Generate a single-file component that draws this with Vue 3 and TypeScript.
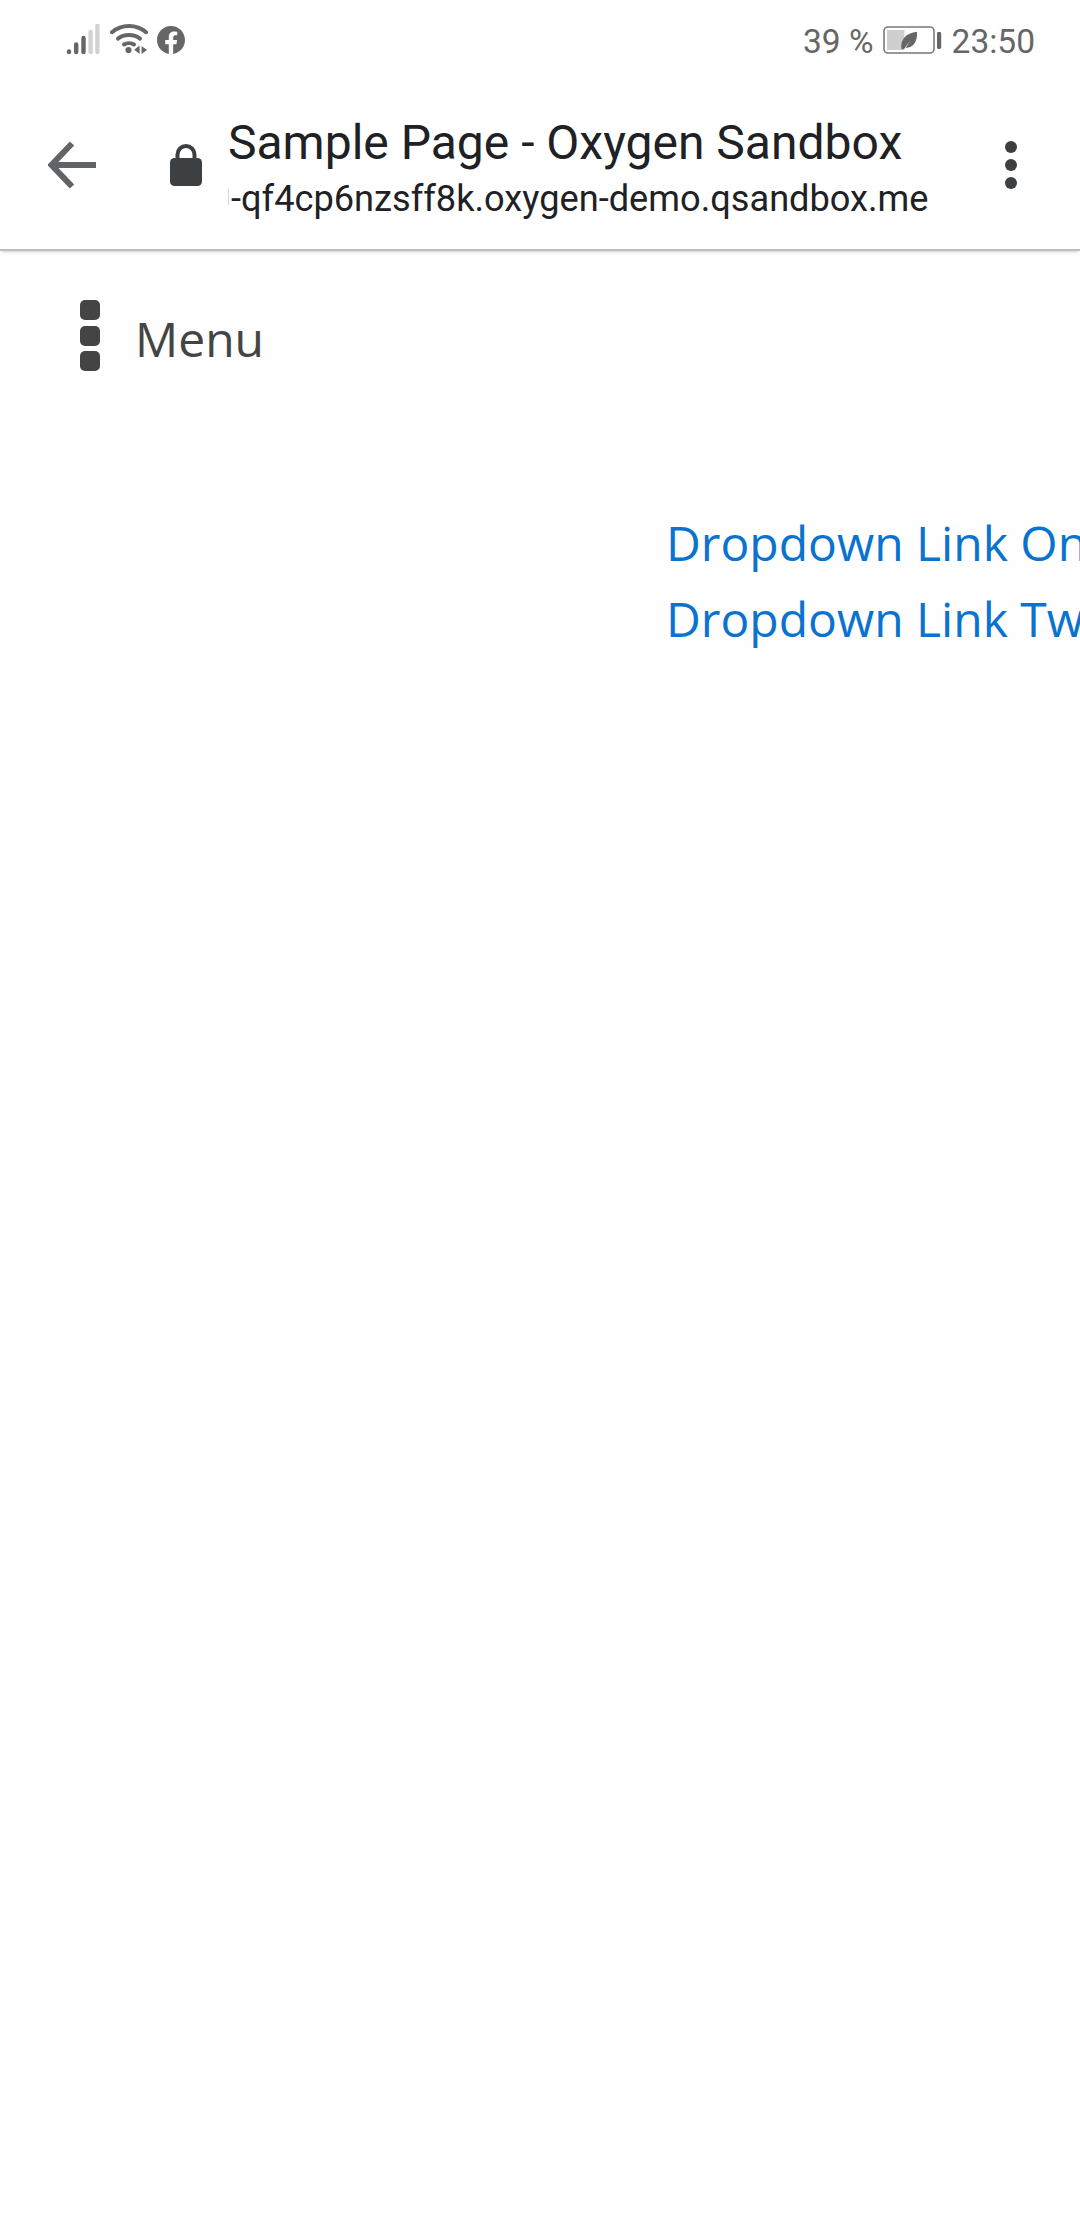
<script setup lang="ts">
const links: string[] = ['Dropdown Link One', 'Dropdown Link Two']
</script>

<template>
  <div class="page">
    <div class="status">
      <div class="status-left">
        <svg class="sig" width="35" height="32" viewBox="0 0 35 32">
          <g fill="none" stroke-linecap="round" stroke-width="4.4">
            <path d="M3 28.5V29" stroke="#666" />
            <path d="M10.2 21.5V29" stroke="#666" />
            <path d="M17.5 15V29" stroke="#666" />
            <path d="M24.6 9V29" stroke="#d2d2d2" />
            <path d="M31.4 3V29" stroke="#d2d2d2" />
          </g>
        </svg>
        <svg class="wifi" width="38" height="32" viewBox="0 0 38 32">
          <g fill="none" stroke="#666" stroke-width="4" stroke-linecap="round">
            <path d="M2 9.2C11.5 1 26.5 1 36 9.2" />
            <path d="M8 15.6C14 10.8 24 10.8 30 15.6" />
            <path d="M14 21.5C16.8 19.7 21.2 19.7 24 21.5" />
          </g>
          <circle cx="18.5" cy="27" r="3.1" fill="#666" />
          <path d="M29.6 22.5v8.5l-5.4-4.2zM31.6 23v8l5.4-4z" fill="#666" />
        </svg>
        <svg class="fb" width="28" height="28" viewBox="0 0 24 24">
          <path fill="#666" d="M24 12.073c0-6.627-5.373-12-12-12s-12 5.373-12 12c0 5.99 4.388 10.954 10.125 11.854v-8.385H7.078v-3.47h3.047V9.43c0-3.007 1.792-4.669 4.533-4.669 1.312 0 2.686.235 2.686.235v2.953H15.83c-1.491 0-1.956.925-1.956 1.874v2.25h3.328l-.532 3.47h-2.796v8.385C19.612 23.027 24 18.062 24 12.073z" />
        </svg>
      </div>
      <div class="status-right">
        <span class="pct">39 %</span>
        <svg class="batt" width="59" height="28" viewBox="0 0 59 28">
          <rect x="1" y="1" width="50" height="26" rx="4" fill="#fff" stroke="#7a7a7a" stroke-width="1.6" />
          <rect x="4" y="4" width="17.5" height="20" fill="#cfcfcf" />
          <path d="M18.6 23.4C16.8 14 23 7 34 5.8c.6 9.6-3.2 15.8-11.4 16.3l5-8-6.4 8.6z" fill="#666" />
          <rect x="54" y="6" width="4.2" height="17" rx="1.4" fill="#666" />
        </svg>
        <span class="time">23:50</span>
      </div>
    </div>

    <header class="toolbar">
      <svg class="back" width="48" height="48" viewBox="0 0 48 48">
        <path d="M48 24H5M24 2.5 3.5 24 24 45.5" fill="none" stroke="#606368" stroke-width="6" />
      </svg>
      <svg class="lock" width="32" height="42" viewBox="0 0 32 42">
        <path d="M7.5 16V10.5a8.5 8.5 0 0 1 17 0V16" fill="none" stroke="#3c4043" stroke-width="4" />
        <rect x="0" y="14" width="32" height="28" rx="4.5" fill="#3c4043" />
      </svg>
      <div class="titles">
        <div class="title">Sample Page - Oxygen Sandbox</div>
        <div class="url"><span class="fade"></span>-qf4cp6nzsff8k.oxygen-demo.qsandbox.me</div>
      </div>
      <div class="dots"><i></i><i></i><i></i></div>
    </header>

    <main class="content">
      <div class="menu">
        <div class="menu-icon"><i></i><i></i><i></i></div>
        <span>Menu</span>
      </div>
      <nav class="dropdown">
        <a v-for="link in links" :key="link" href="#" @click.prevent>{{ link }}</a>
      </nav>
    </main>
  </div>
</template>

<style>
html, body { margin: 0; background: #fff; }
</style>

<style scoped>
.page {
  width: 1080px;
  height: 2240px;
  overflow: hidden;
  background: #fff;
  display: flex;
  flex-direction: column;
  font-family: Roboto, "Liberation Sans", sans-serif;
}
.status {
  height: 80px;
  flex: none;
  display: flex;
  justify-content: space-between;
  align-items: center;
  padding: 0 45px 0 66px;
  box-sizing: border-box;
}
.status-left { display: flex; align-items: center; }
.sig { margin-top: -2px; }
.wifi { margin-left: 9px; margin-top: -2px; }
.fb { margin-left: 9px; }
.status-right {
  display: flex;
  align-items: center;
  color: #666;
  font-size: 33.5px;
  padding-top: 2px;
}
.batt { margin-left: 9px; margin-right: 10px; margin-top: -2px; }
.toolbar {
  height: 171px;
  flex: none;
  box-sizing: border-box;
  display: flex;
  align-items: center;
  background: #fff;
  padding-left: 48px;
  border-bottom: 2px solid #bdbdbd;
  box-shadow: 0 3px 3px -2px rgba(0, 0, 0, 0.18);
  position: relative;
  z-index: 1;
}
.back { flex: none; }
.lock { flex: none; margin-left: 74px; margin-top: 0; }
.titles { margin-left: 26px; width: 760px; flex: none; margin-top: 5px; }
.title { font-size: 48px; line-height: 60px; color: #202124; white-space: nowrap; }
.url {
  position: relative;
  font-size: 36.2px;
  line-height: 46px;
  margin-top: 3px;
  color: #202124;
  white-space: nowrap;
  padding-left: 3px;
}
.fade {
  position: absolute;
  left: 0;
  top: 13px;
  width: 1px;
  height: 16px;
  background: #d8d8d8;
}
.dots {
  display: flex;
  flex-direction: column;
  gap: 6px;
  margin-left: 17px;
}
.dots i { width: 12px; height: 12px; border-radius: 50%; background: #3c4043; display: block; }
.content { flex: 1; font-family: "Open Sans", sans-serif; background: #fefefe; }
.menu {
  display: flex;
  align-items: center;
  padding: 49px 0 0 80px;
  color: #444;
  font-size: 48px;
}
.menu span { margin-left: 35px; margin-top: 6px; }
.menu-icon { display: flex; flex-direction: column; gap: 5.5px; }
.menu-icon i { display: block; width: 20px; height: 20px; border-radius: 5px; background: #444; }
.dropdown {
  display: flex;
  flex-direction: column;
  margin: 134px 0 0 666px;
  width: 600px;
}
.dropdown a {
  color: #0a72cf;
  font-size: 48px;
  line-height: 76px;
  text-decoration: none;
  white-space: nowrap;
}
</style>
